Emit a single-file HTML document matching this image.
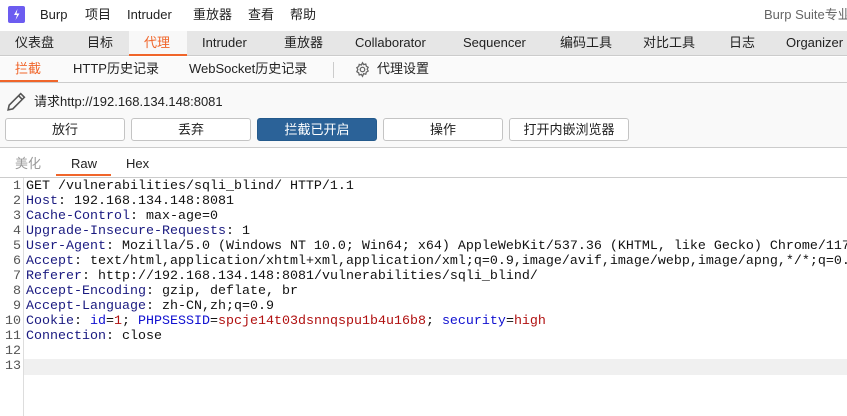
<!DOCTYPE html>
<html><head><meta charset="utf-8"><style>
*{margin:0;padding:0;box-sizing:border-box}
body{width:847px;height:416px;overflow:hidden;background:#fff;font-family:"Liberation Sans","Noto Sans CJK SC",sans-serif;font-size:13px;line-height:16px;color:#222;position:relative}
.a{position:absolute;white-space:nowrap;line-height:16px}
.btn{position:absolute;top:118px;height:23px;width:120px;border:1px solid #c4c4c4;border-radius:3px;background:#fff;text-align:center;line-height:21px;font-size:13px}
.code{position:absolute;left:0;top:179px;width:847px;font-family:"Liberation Mono",monospace;font-size:13.33px;line-height:15px}
.ln{position:absolute;left:0;width:21px;text-align:right;color:#555;line-height:15px}
.tx{position:absolute;left:26px;white-space:pre;color:#111;line-height:15px}
.h{color:#1a1a80}.b{color:#1010d0}.r{color:#b01010}
</style></head><body>
<!-- menu -->
<div class="a" style="left:8px;top:6px;width:17px;height:17px;background:#6c5cf0;border-radius:2px"></div>
<svg class="a" style="left:8px;top:6px" width="17" height="17"><path d="M9.5 3 L6 9 H9 L7.5 14 L11.5 7.5 H8.5 Z" fill="#fff"/></svg>
<div class="a" style="left:40px;top:7px">Burp</div>
<div class="a" style="left:85px;top:7px">项目</div>
<div class="a" style="left:127px;top:7px">Intruder</div>
<div class="a" style="left:193px;top:7px">重放器</div>
<div class="a" style="left:248px;top:7px">查看</div>
<div class="a" style="left:290px;top:7px">帮助</div>
<div class="a" style="left:764px;top:7px;color:#666">Burp Suite专业</div>
<!-- tabs -->
<div class="a" style="left:0;top:31px;width:847px;height:25px;background:#e6e6e6;border-bottom:1px solid #ccc"></div>
<div class="a" style="left:129px;top:31px;width:58px;height:25px;background:#f8f8f8;border-bottom:2px solid #f0652a"></div>
<div class="a" style="left:15px;top:35px">仪表盘</div>
<div class="a" style="left:87px;top:35px">目标</div>
<div class="a" style="left:144px;top:35px;color:#f0652a">代理</div>
<div class="a" style="left:202px;top:35px">Intruder</div>
<div class="a" style="left:284px;top:35px">重放器</div>
<div class="a" style="left:355px;top:35px">Collaborator</div>
<div class="a" style="left:463px;top:35px">Sequencer</div>
<div class="a" style="left:560px;top:35px">编码工具</div>
<div class="a" style="left:643px;top:35px">对比工具</div>
<div class="a" style="left:729px;top:35px">日志</div>
<div class="a" style="left:786px;top:35px">Organizer</div>
<!-- subtabs -->
<div class="a" style="left:0;top:57px;width:847px;height:26px;background:#fafafa;border-bottom:1px solid #ccc"></div>
<div class="a" style="left:0;top:80px;width:58px;height:2px;background:#f0652a"></div>
<div class="a" style="left:15px;top:61px;color:#f0652a">拦截</div>
<div class="a" style="left:73px;top:61px">HTTP历史记录</div>
<div class="a" style="left:189px;top:61px">WebSocket历史记录</div>
<div class="a" style="left:333px;top:62px;width:1px;height:16px;background:#ccc"></div>
<svg class="a" style="left:354px;top:61px" width="17" height="17" viewBox="0 0 24 24" fill="none" stroke="#666" stroke-width="1.8"><circle cx="12" cy="12" r="3.2"/><path d="M12 2.5l1.6 2.6 3-.8.8 3 2.6 1.6-1.4 2.6 1.4 2.6-2.6 1.6-.8 3-3-.8L12 21.5l-1.6-2.6-3 .8-.8-3-2.6-1.6L5.4 12 4 9.4l2.6-1.6.8-3 3 .8z"/></svg>
<div class="a" style="left:377px;top:61px">代理设置</div>
<!-- request area -->
<div class="a" style="left:0;top:83px;width:847px;height:65px;background:#f9f9f9;border-bottom:1px solid #ccc"></div>
<svg class="a" style="left:6px;top:91px" width="21" height="21" viewBox="0 0 20 20" fill="none" stroke="#555" stroke-width="1.5"><path d="M2 18 L3 13.5 L14 2.5 L17.5 6 L6.5 17 Z M12 4.5 L15.5 8"/></svg>
<div class="a" style="left:34px;top:94px">请求http://192.168.134.148:8081</div>
<div class="btn" style="left:5px">放行</div>
<div class="btn" style="left:131px">丢弃</div>
<div class="btn" style="left:257px;background:#2b6298;border-color:#245a8c;color:#fff">拦截已开启</div>
<div class="btn" style="left:383px">操作</div>
<div class="btn" style="left:509px">打开内嵌浏览器</div>
<!-- raw tabs -->
<div class="a" style="left:0;top:177px;width:847px;height:1px;background:#ccc"></div>
<div class="a" style="left:56px;top:174px;width:55px;height:2px;background:#f0652a"></div>
<div class="a" style="left:15px;top:156px;color:#999">美化</div>
<div class="a" style="left:71px;top:156px">Raw</div>
<div class="a" style="left:126px;top:156px">Hex</div>
<!-- editor -->
<div class="a" style="left:23px;top:178px;width:1px;height:238px;background:#ddd"></div>
<div class="a" style="left:24px;top:359px;width:823px;height:16px;background:#f0f0f0"></div>
<div class="code">
<div class="ln" style="top:0">1</div><div class="tx" style="top:0">GET /vulnerabilities/sqli_blind/ HTTP/1.1</div>
<div class="ln" style="top:15px">2</div><div class="tx" style="top:15px"><span class="h">Host</span>: 192.168.134.148:8081</div>
<div class="ln" style="top:30px">3</div><div class="tx" style="top:30px"><span class="h">Cache-Control</span>: max-age=0</div>
<div class="ln" style="top:45px">4</div><div class="tx" style="top:45px"><span class="h">Upgrade-Insecure-Requests</span>: 1</div>
<div class="ln" style="top:60px">5</div><div class="tx" style="top:60px"><span class="h">User-Agent</span>: Mozilla/5.0 (Windows NT 10.0; Win64; x64) AppleWebKit/537.36 (KHTML, like Gecko) Chrome/117</div>
<div class="ln" style="top:75px">6</div><div class="tx" style="top:75px"><span class="h">Accept</span>: text/html,application/xhtml+xml,application/xml;q=0.9,image/avif,image/webp,image/apng,*/*;q=0.</div>
<div class="ln" style="top:90px">7</div><div class="tx" style="top:90px"><span class="h">Referer</span>: http://192.168.134.148:8081/vulnerabilities/sqli_blind/</div>
<div class="ln" style="top:105px">8</div><div class="tx" style="top:105px"><span class="h">Accept-Encoding</span>: gzip, deflate, br</div>
<div class="ln" style="top:120px">9</div><div class="tx" style="top:120px"><span class="h">Accept-Language</span>: zh-CN,zh;q=0.9</div>
<div class="ln" style="top:135px">10</div><div class="tx" style="top:135px"><span class="h">Cookie</span>: <span class="b">id</span>=<span class="r">1</span>; <span class="b">PHPSESSID</span>=<span class="r">spcje14t03dsnnqspu1b4u16b8</span>; <span class="b">security</span>=<span class="r">high</span></div>
<div class="ln" style="top:150px">11</div><div class="tx" style="top:150px"><span class="h">Connection</span>: close</div>
<div class="ln" style="top:165px">12</div>
<div class="ln" style="top:180px">13</div>
</div>
</body></html>
